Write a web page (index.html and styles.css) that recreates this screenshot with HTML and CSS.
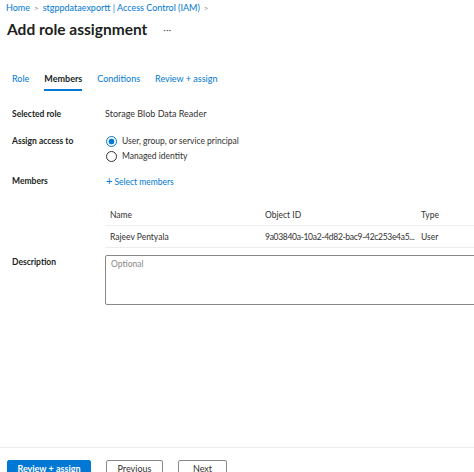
FILE: index.html
```html
<!DOCTYPE html>
<html lang="en">
<head>
    <meta charset="UTF-8">
    <title>Add role assignment</title>
    <link rel="stylesheet" href="styles.css">
</head>
<body>
    <div class="page">
        <div class="breadcrumb">
            <a>Home</a><span class="chev">&gt;</span><a>stgppdataexportt | Access Control (IAM)</a><span class="chev">&gt;</span>
        </div>
        <div class="title-row">
            <h1>Add role assignment</h1>
            <span class="more">···</span>
        </div>

        <div class="tabs">
            <span class="tab">Role</span>
            <span class="tab active">Members</span>
            <span class="tab">Conditions</span>
            <span class="tab">Review + assign</span>
        </div>

        <div class="form">
            <div class="row row-role">
                <div class="label">Selected role</div>
                <div class="value">Storage Blob Data Reader</div>
            </div>
            <div class="row row-access">
                <div class="label">Assign access to</div>
                <div class="radios">
                    <div class="radio checked"><span class="dot"></span>User, group, or service principal</div>
                    <div class="radio"><span class="dot"></span>Managed identity</div>
                </div>
            </div>
            <div class="row row-members">
                <div class="label">Members</div>
                <div class="value link"><span class="plus">+</span>Select members</div>
            </div>
            <div class="row row-table">
                <div class="label"></div>
                <div class="table">
                    <div class="tr th">
                        <div class="c-name">Name</div>
                        <div class="c-id">Object ID</div>
                        <div class="c-type">Type</div>
                    </div>
                    <div class="tr">
                        <div class="c-name">Rajeev Pentyala</div>
                        <div class="c-id id-val">9a03840a-10a2-4d82-bac9-42c253e4a5...</div>
                        <div class="c-type">User</div>
                    </div>
                </div>
            </div>
            <div class="row row-desc">
                <div class="label">Description</div>
                <div class="textarea">Optional</div>
            </div>
        </div>
    </div>

    <div class="footer">
        <button class="btn primary">Review + assign</button>
        <button class="btn">Previous</button>
        <button class="btn">Next</button>
    </div>
</body>
</html>
```

FILE: styles.css
```css
* {
    margin: 0;
    padding: 0;
    box-sizing: border-box;
}

body {
    width: 474px;
    height: 472px;
    overflow: hidden;
    background: #fff;
    color: #323130;
    font-family: 'Lato', 'Noto Sans', sans-serif;
    font-size: 8.5px;
    position: relative;
}

.page {
    padding: 0 0 0 6px;
}

.breadcrumb {
    color: #0078d4;
    font-size: 9px;
    height: 16px;
    line-height: 16px;
    display: flex;
    gap: 4px;
    white-space: nowrap;
}

.breadcrumb .chev {
    color: #8a8886;
    font-size: 8px;
}

.title-row {
    display: flex;
    align-items: center;
    height: 26px;
    padding-left: 1px;
}

h1 {
    font-size: 15.5px;
    font-weight: 700;
    color: #201f1e;
}

.more {
    margin-left: 16px;
    color: #605e5c;
    font-size: 10px;
}

.tabs {
    margin-top: 28px;
    display: flex;
    gap: 15px;
    padding-left: 6px;
    height: 23px;
}

.tab {
    color: #0078d4;
    font-size: 9px;
    line-height: 18px;
    height: 23px;
    position: relative;
    white-space: nowrap;
}

.tab.active {
    color: #201f1e;
    font-weight: 700;
}

.tab.active::after {
    content: '';
    position: absolute;
    left: 0;
    right: 0;
    top: 19px;
    height: 2px;
    background: #0078d4;
}

.form {
    padding-left: 6px;
    margin-top: 14px;
}

.row {
    display: flex;
    white-space: nowrap;
}

.label {
    width: 93px;
    flex: none;
    font-weight: 700;
    font-size: 8.5px;
    color: #201f1e;
}

.row-role {
    height: 27px;
    line-height: 14px;
    font-size: 9px;
}

.row-access {
    height: 34px;
    line-height: 14px;
}

.radios {
    display: flex;
    flex-direction: column;
    gap: 1px;
}

.radio {
    display: flex;
    align-items: center;
    gap: 5px;
    margin-left: 1px;
}

.dot {
    width: 11px;
    height: 11px;
    border: 1px solid #323130;
    border-radius: 50%;
    display: inline-block;
}

.radio.checked .dot {
    border-color: #0078d4;
    background: radial-gradient(circle, #0078d4 0 2.6px, #fff 3.2px);
}

.row-members {
    margin-top: 6px;
    height: 22px;
    line-height: 14px;
}

.link {
    color: #0078d4;
    padding-left: 1px;
}

.plus {
    font-size: 11px;
    margin-right: 2px;
}

.row-table {
    margin-top: 6px;
}

.table {
    width: 420px;
    flex: none;
}

.tr {
    display: flex;
    height: 22px;
    line-height: 22px;
    border-bottom: 1px solid #edebe9;
    padding-left: 5px;
}

.tr.th {
    color: #323130;
    height: 24px;
    line-height: 26px;
    border-bottom-color: #f0efee;
}

.c-name {
    width: 155px;
}

.c-id {
    width: 156px;
    overflow: hidden;
}

.id-val {
    letter-spacing: -0.3px;
}

.c-type {
    width: 60px;
}

.row-desc {
    margin-top: 7px;
    line-height: 14px;
}

.textarea {
    width: 380px;
    flex: none;
    height: 50px;
    border: 1px solid #8a8886;
    border-radius: 2px;
    color: #8a8886;
    padding: 1px 5px;
}

.footer {
    position: absolute;
    left: 0;
    right: 0;
    top: 447px;
    border-top: 1px solid #edebe9;
    padding: 12px 0 0 7px;
    display: flex;
    gap: 15px;
}

.btn {
    height: 20px;
    padding: 0 0 4px;
    font-family: inherit;
    font-size: 9px;
    background: #fff;
    border: 1px solid #8a8886;
    border-radius: 2px;
    color: #323130;
    width: 57px;
    white-space: nowrap;
}

.btn.primary {
    width: 84px;
    background: #0078d4;
    border-color: #0078d4;
    color: #fff;
    font-weight: 700;
}

.btn + .btn + .btn {
    width: 49px;
}
```
